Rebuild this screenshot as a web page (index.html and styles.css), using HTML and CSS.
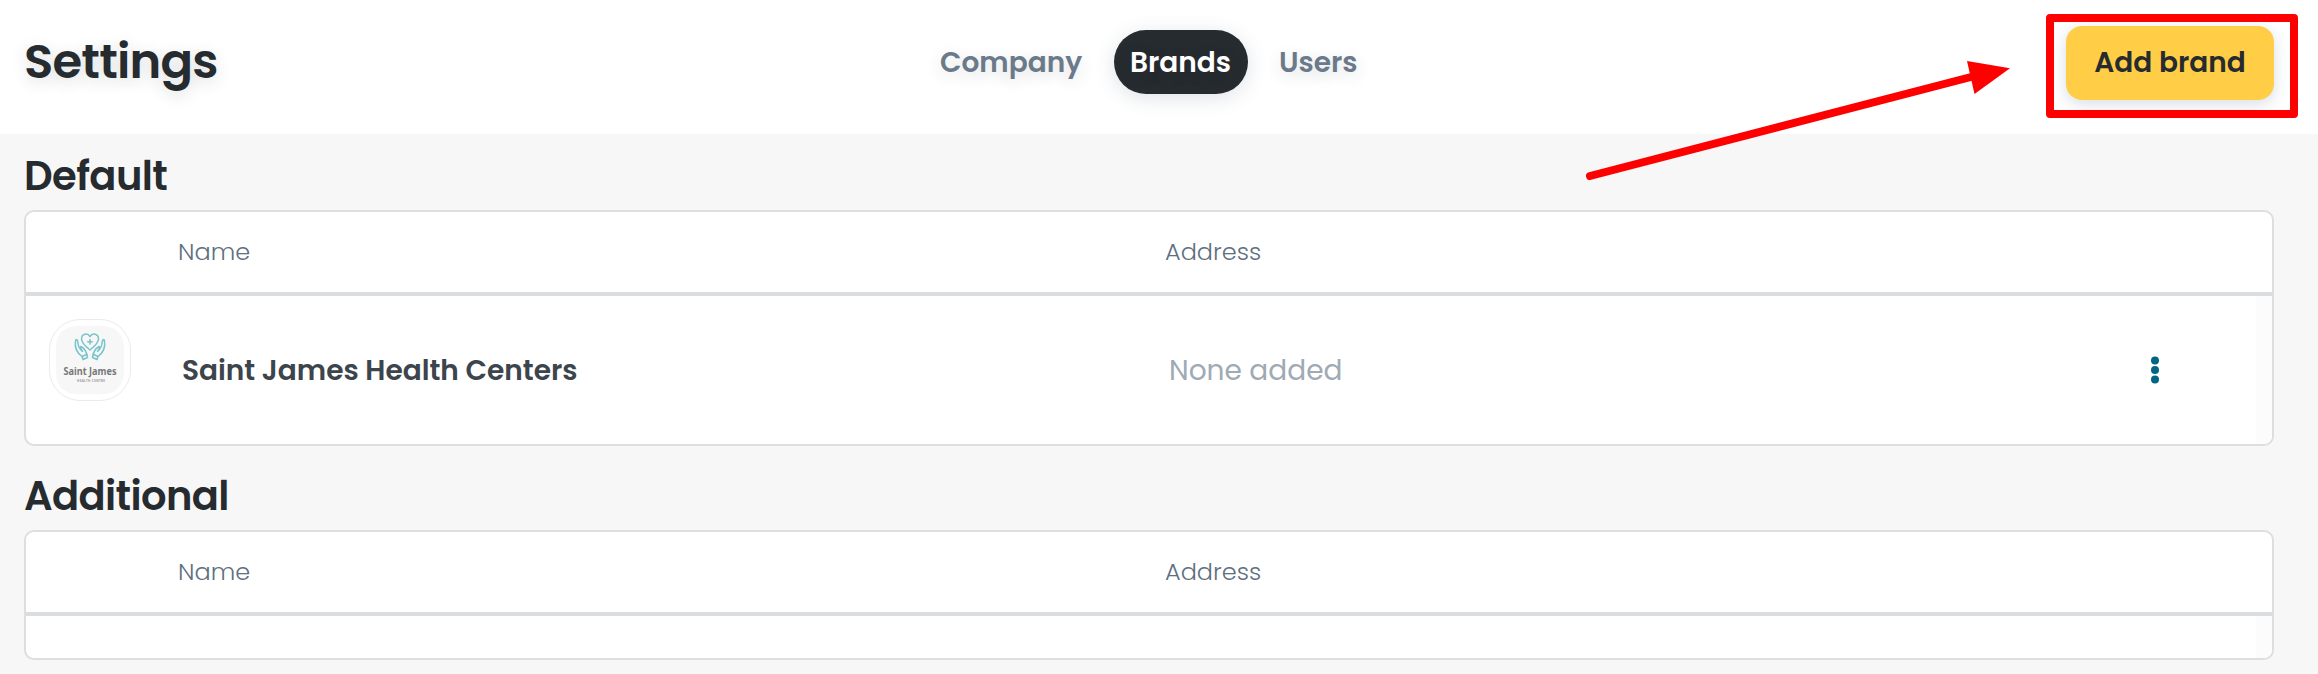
FILE: index.html
```html
<!DOCTYPE html>
<html lang="en">
  <head>
    <meta charset="UTF-8">
    <meta name="viewport" content="width=device-width, initial-scale=1.0">
    <title>Settings - Brands</title>
    <link rel="stylesheet" href="styles.css">
  </head>
  <body>
    <header class="page-header">
      <h1>Settings</h1>
      <nav class="tabs">
        <a class="tab tab-company">Company</a>
        <a class="tab active">Brands</a>
        <a class="tab tab-users">Users</a>
      </nav>
      <div class="header-actions">
        <button class="add-btn">Add brand</button>
      </div>
    </header>

    <main>
      <h2>Default</h2>
      <section class="table">
        <div class="row table-head">
          <span class="col-name">Name</span>
          <span class="col-address">Address</span>
        </div>
        <div class="table-body">
          <div class="row brand-row">
            <div class="brand-logo">
              <svg viewBox="0 0 68 68" width="68" height="68">
                <rect width="68" height="68" rx="20" fill="#f7f7f7"/>
                <g fill="none" stroke="#79c3cb" stroke-width="1.5" stroke-linecap="round" stroke-linejoin="round">
                  <path d="M34 24C29 20 25.500 17 25.500 13C25.500 7.500 31.500 6.500 34 10.500C36.500 6.500 42.500 7.500 42.500 13C42.500 17 39 20 34 24Z"/>
                  <path d="M34 13.500v4.500M31.700 15.800h4.600"/>
                  <path id="hand" d="M27 33.500L31.500 31.500C31 27 28.500 22.500 25 20.500C24 20.500 24 22 26.500 25.500C24 23.500 22.500 21 22 17.500C21.800 13.500 20 12 19.500 15C18.500 21 20 26 26 30.500ZM26 30.500L30.500 28.500"/>
                  <use href="#hand" transform="translate(68 0) scale(-1 1)"/>
                </g>
                <text class="logo-name" x="34" y="48.800" text-anchor="middle" textLength="53" lengthAdjust="spacingAndGlyphs">Saint James</text>
                <text class="logo-sub" x="35" y="55.800" text-anchor="middle" textLength="28">HEALTH CENTRE</text>
              </svg>
            </div>
            <span class="brand-name">Saint James Health Centers</span>
            <span class="brand-address">None added</span>
            <svg class="menu-icon" viewBox="0 0 8 28" width="8" height="28" fill="#006583">
              <circle cx="4" cy="4.500" r="4"/>
              <circle cx="4" cy="14" r="4"/>
              <circle cx="4" cy="23.500" r="4"/>
            </svg>
          </div>
          <div class="scroll-track"></div>
        </div>
      </section>

      <h2 class="additional">Additional</h2>
      <section class="table">
        <div class="row table-head">
          <span class="col-name">Name</span>
          <span class="col-address">Address</span>
        </div>
        <div class="table-body empty">
          <div class="row"></div>
          <div class="scroll-track"></div>
        </div>
      </section>
    </main>

    <!-- Callout over the page -->
    <div class="highlight-box"></div>
    <svg class="arrow" viewBox="0 0 430 130" width="430" height="130">
      <path d="M10 116L391 17" stroke="#f00" stroke-width="8" stroke-linecap="round"/>
      <path d="M387 1L430 8.300L394.500 34Z" fill="#f00"/>
    </svg>
  </body>
</html>
```
FILE: styles.css
```css
* {
  box-sizing: border-box;
}
body {
  margin: 0;
  height: 674px;
  overflow: hidden;
  background: #f7f7f7;
  color: #262b2f;
  font-family: 'Poppins', 'Inter', sans-serif;
}
/* Header */
.page-header {
  display: grid;
  grid-template-columns: 891px 1fr 252px;
  height: 134px;
  padding: 0 44px 0 24px;
  background: #fff;
}
h1 {
  margin: 32px 0 0;
  font-size: 48px;
  font-weight: 600;
  line-height: 60px;
  letter-spacing: -0.016em;
  text-shadow: 0 4px 16px rgba(38, 50, 60, 0.16);
}
.tabs {
  display: flex;
  padding: 30px 0 0 9px;
}
.tab {
  height: 64px;
  padding: 1px 16px 0;
  border-radius: 32px;
  font-size: 28px;
  font-weight: 600;
  line-height: 64px;
  color: #6b7a8a;
  white-space: nowrap;
  text-shadow: 0 4px 16px rgba(38, 50, 60, 0.16);
}
.tab-company {
  width: 190px;
}
.tab.active {
  width: 134px;
  background: #262b2f;
  color: #fff;
  box-shadow: 0 4px 20px rgba(60, 80, 110, 0.16);
}
.tab-users {
  margin-left: 15px;
}
.header-actions {
  display: flex;
  justify-content: flex-end;
  padding-top: 26px;
}
.add-btn {
  width: 208px;
  height: 74px;
  padding: 0;
  border: none;
  border-radius: 16px;
  background: #ffcd46;
  color: #262b2f;
  font: inherit;
  font-size: 28px;
  font-weight: 600;
  box-shadow: 0 4px 16px rgba(60, 90, 120, 0.2);
}
/* Content */
main {
  padding: 16px 44px 0 24px;
}
h2 {
  margin: 0;
  height: 60px;
  font-size: 40px;
  font-weight: 600;
  line-height: 52px;
  letter-spacing: -0.015em;
}
h2.additional {
  margin-top: 24px;
}
/* Tables */
.table {
  border: 2px solid #dedede;
  border-radius: 10px;
  background: #fff;
  overflow: hidden;
}
.row {
  display: grid;
  grid-template-columns: 152px 987px 1fr 121px;
}
.table-head {
  height: 84px;
  border-bottom: 4px solid #dbdee0;
  font-size: 24px;
  font-weight: 300;
  line-height: 80px;
  color: #606f80;
}
.col-name {
  grid-column: 2;
}
.table-body {
  display: grid;
  grid-template-columns: 1fr 16px;
  height: 148px;
}
.table-body.empty {
  height: 42px;
}
.scroll-track {
  background: #fcfcfc;
}
.brand-row {
  grid-template-columns: 156px 987px 982px 1fr;
  align-items: center;
  height: 148px;
  font-size: 28px;
}
.brand-logo {
  align-self: start;
  width: 82px;
  height: 82px;
  margin: 23px 0 0 23px;
  padding: 6px;
  border: 1px solid #ebebeb;
  border-radius: 31px;
}
.brand-logo svg {
  display: block;
}
.logo-name {
  font: 700 10px 'Noto Sans', sans-serif;
  fill: #777;
}
.logo-sub {
  font: 700 3px 'Noto Sans', sans-serif;
  fill: #999;
}
.brand-name,
.brand-address {
  padding-top: 2px;
}
.brand-name {
  font-weight: 600;
  color: #3c444c;
}
.brand-address {
  color: #a0aab4;
}
/* Callout */
.highlight-box {
  position: absolute;
  top: 14px;
  left: 2046px;
  width: 252px;
  height: 104px;
  border: 8px solid #f00;
  border-radius: 4px;
}
.arrow {
  position: absolute;
  top: 60px;
  left: 1580px;
  fill: none;
}
```
